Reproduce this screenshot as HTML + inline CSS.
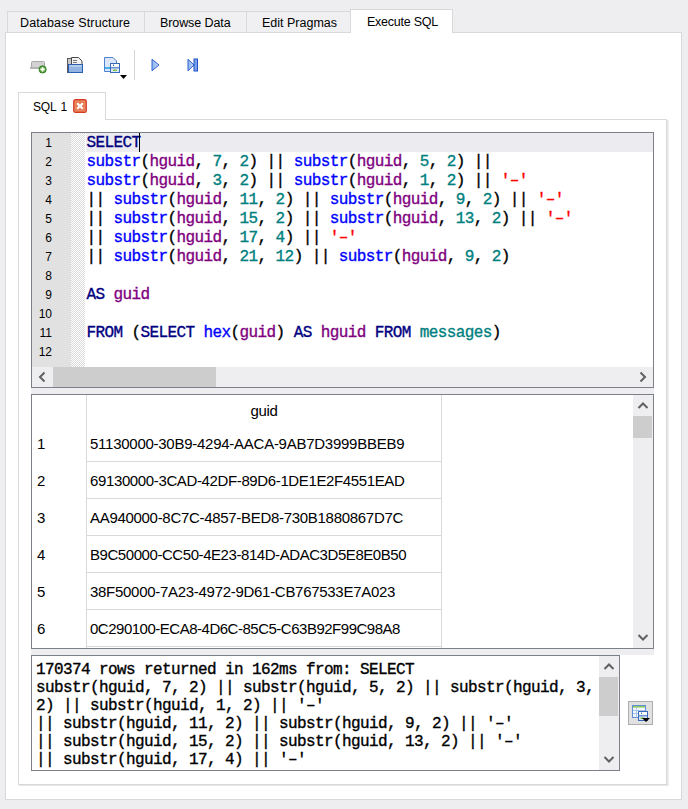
<!DOCTYPE html>
<html><head><meta charset="utf-8">
<style>
*{box-sizing:border-box;margin:0;padding:0}
html,body{width:688px;height:809px;overflow:hidden;background:#eeeef1;font-family:"Liberation Sans",sans-serif;color:#000}
.a{position:absolute}
.tab{position:absolute;top:11px;height:22px;border:1px solid #d9d9d9;border-bottom:none;background:#f0f0f2;font-size:12.5px;white-space:nowrap}
.tab span{position:absolute;top:4px}
.pane{position:absolute;left:5px;top:32px;width:677px;height:768px;background:#fff;border:1px solid #d9d9d9}
.mono{font-family:"Liberation Mono",monospace;font-size:16px;letter-spacing:-0.6px;-webkit-text-stroke-width:0.35px;white-space:pre}
.ln{position:absolute;height:19px;line-height:19px}
.lnum{left:0;width:20px;text-align:right;font-size:12px;color:#000}
.chk{background:repeating-conic-gradient(#dcdcdc 0 25%,#fff 0 50%) 0 0/2px 2px}
.gtxt{font-size:15px;letter-spacing:-0.3px;white-space:nowrap}
.k{color:#000080}.f{color:#0000ff}.i{color:#800080}.n{color:#008080}.s{color:#ff0000}.t{color:#008080}
</style></head><body>
<!-- tabs -->
<div class="tab" style="left:7px;width:138px"><span style="left:12px;letter-spacing:0.14px">Database Structure</span></div>
<div class="tab" style="left:144px;width:103px"><span style="left:15px;letter-spacing:-0.09px">Browse Data</span></div>
<div class="tab" style="left:246px;width:105px"><span style="left:15px">Edit Pragmas</span></div>
<div class="pane"></div>
<div class="tab" style="left:350px;top:9px;width:103px;height:24px;background:#fff;z-index:2"><span style="left:16px;top:5px;letter-spacing:-0.25px">Execute SQL</span></div>

<!-- toolbar -->
<svg class="a" style="left:26px;top:52px" width="26" height="26" viewBox="0 0 26 26">
<rect x="5.5" y="9.5" width="13" height="7" rx="1" fill="#d2d2d2" stroke="#a9a9a9"/>
<rect x="4" y="15" width="15" height="2" fill="#b4b4b4"/>
<circle cx="16.6" cy="17.4" r="3.6" fill="#5aa83c" stroke="#2f7a22" stroke-width="0.9"/>
<path d="M16.6 15.2v4.4M14.4 17.4h4.4" stroke="#fff" stroke-width="1.6"/>
</svg>
<svg class="a" style="left:62px;top:52px" width="26" height="26" viewBox="0 0 26 26">
<rect x="5.5" y="6.5" width="4" height="14" fill="#c9c9c9" stroke="#5a5a5a"/>
<path d="M9.5 20.5V5.5h7l3.5 3.5v11.5z" fill="#f2f2f2" stroke="#4a4a4a"/>
<path d="M11 8.5h4M11 10.5h4" stroke="#777" stroke-width="1"/>
<rect x="6.5" y="12.5" width="14" height="8" fill="#93b4e2" stroke="#2d5fb3"/>
<rect x="7.5" y="13.5" width="12" height="1" fill="#cfe6f0"/>
</svg>
<svg class="a" style="left:100px;top:52px" width="30" height="30" viewBox="0 0 30 30">
<path d="M4.5 19.5V5.5h8.5l3.5 3.5v10.5z" fill="#dbe6f8" stroke="#4c82d2"/>
<rect x="5" y="15" width="5" height="2" fill="#45b0e8"/>
<rect x="10.5" y="11.5" width="9" height="9" fill="#dfe8f8" stroke="#3a6bbb"/>
<rect x="11" y="12" width="8" height="2.5" fill="#fff"/>
<rect x="13" y="12.5" width="1" height="1.5" fill="#3a6bbb"/>
<rect x="11" y="15" width="8" height="1.5" fill="#6d93d2"/>
<rect x="13" y="17.5" width="4" height="1.5" fill="#7cc04a"/>
<path d="M20 23h7l-3.5 4z" fill="#000"/>
</svg>
<div class="a" style="left:134px;top:50px;width:1px;height:30px;background:#d4d4d4"></div>
<svg class="a" style="left:144px;top:52px" width="60" height="26" viewBox="0 0 60 26">
<defs><linearGradient id="pg" x1="0" y1="0" x2="1" y2="0"><stop offset="0" stop-color="#8fb4ee"/><stop offset="1" stop-color="#c2d6f6"/></linearGradient></defs>
<path d="M8 7.2v11.6l7-5.8z" fill="url(#pg)" stroke="#2f63d0" stroke-width="1"/>
<path d="M44 7.2v11.6l6-5.8z" fill="url(#pg)" stroke="#2f63d0" stroke-width="1"/>
<rect x="50" y="7" width="3.5" height="12" fill="#7aa2ea" stroke="#1f50c8" stroke-width="1"/>
</svg>

<!-- inner tab widget -->
<div class="a" style="left:19px;top:120px;width:650px;height:666px;background:#eeeef1"></div><div class="a" style="left:19px;top:120px;width:649px;height:666px;background:#e6e6ea"></div>
<div class="a" style="left:18px;top:119px;width:649px;height:666px;border:1px solid #d9d9d9;background:#fff"></div>
<div class="a" style="left:18px;top:92px;width:88px;height:28px;border:1px solid #d9d9d9;border-bottom:none;background:#fff;z-index:2"><span class="a" style="left:14px;top:7px;font-size:12px;letter-spacing:-0.2px;word-spacing:1.5px">SQL 1</span>
<svg class="a" style="left:54px;top:6px" width="14" height="14" viewBox="0 0 14 14"><rect x="0.8" y="0.8" width="12.4" height="12.4" rx="1.5" fill="#e67a52" stroke="#d83c22" stroke-width="1.4"/><rect x="2" y="2" width="10" height="10" fill="none" stroke="#ec9a78" stroke-width="0.6"/><path d="M4.2 4.2l5.6 5.6M9.8 4.2l-5.6 5.6" stroke="#fff" stroke-width="2.2"/></svg></div>

<!-- editor -->
<div class="a" id="ed" style="left:31px;top:132px;width:623px;height:256px;border:1px solid #7c8189;background:#fff;overflow:hidden">
<div class="a" style="left:0;top:0;width:39px;height:234px;background:#e1e1e1"></div>
<div class="a chk" style="left:39px;top:0;width:14px;height:234px"></div>
<div class="a" style="left:54px;top:0;width:567px;height:19px;background:#ececf0"></div>
<div class="ln lnum" style="top:1px">1</div>
<div class="ln mono" style="left:54.5px;top:1px"><span class="k">SELECT</span></div>
<div class="ln lnum" style="top:20px">2</div>
<div class="ln mono" style="left:54.5px;top:20px"><span class="f">substr</span>(<span class="i">hguid</span>, <span class="n">7</span>, <span class="n">2</span>) || <span class="f">substr</span>(<span class="i">hguid</span>, <span class="n">5</span>, <span class="n">2</span>) ||</div>
<div class="ln lnum" style="top:39px">3</div>
<div class="ln mono" style="left:54.5px;top:39px"><span class="f">substr</span>(<span class="i">hguid</span>, <span class="n">3</span>, <span class="n">2</span>) || <span class="f">substr</span>(<span class="i">hguid</span>, <span class="n">1</span>, <span class="n">2</span>) || <span class="s">'–'</span></div>
<div class="ln lnum" style="top:58px">4</div>
<div class="ln mono" style="left:54.5px;top:58px">|| <span class="f">substr</span>(<span class="i">hguid</span>, <span class="n">11</span>, <span class="n">2</span>) || <span class="f">substr</span>(<span class="i">hguid</span>, <span class="n">9</span>, <span class="n">2</span>) || <span class="s">'–'</span></div>
<div class="ln lnum" style="top:77px">5</div>
<div class="ln mono" style="left:54.5px;top:77px">|| <span class="f">substr</span>(<span class="i">hguid</span>, <span class="n">15</span>, <span class="n">2</span>) || <span class="f">substr</span>(<span class="i">hguid</span>, <span class="n">13</span>, <span class="n">2</span>) || <span class="s">'–'</span></div>
<div class="ln lnum" style="top:96px">6</div>
<div class="ln mono" style="left:54.5px;top:96px">|| <span class="f">substr</span>(<span class="i">hguid</span>, <span class="n">17</span>, <span class="n">4</span>) || <span class="s">'–'</span></div>
<div class="ln lnum" style="top:115px">7</div>
<div class="ln mono" style="left:54.5px;top:115px">|| <span class="f">substr</span>(<span class="i">hguid</span>, <span class="n">21</span>, <span class="n">12</span>) || <span class="f">substr</span>(<span class="i">hguid</span>, <span class="n">9</span>, <span class="n">2</span>)</div>
<div class="ln lnum" style="top:134px">8</div>
<div class="ln lnum" style="top:153px">9</div>
<div class="ln mono" style="left:54.5px;top:153px"><span class="k">AS</span> <span class="i">guid</span></div>
<div class="ln lnum" style="top:172px">10</div>
<div class="ln lnum" style="top:191px">11</div>
<div class="ln mono" style="left:54.5px;top:191px"><span class="k">FROM</span> (<span class="k">SELECT</span> <span class="f">hex</span>(<span class="i">guid</span>) <span class="k">AS</span> <span class="i">hguid</span> <span class="k">FROM</span> <span class="t">messages</span>)</div>
<div class="ln lnum" style="top:210px">12</div>
<div class="a" style="left:107px;top:0;width:1px;height:19px;background:#000"></div>
<div class="a" style="left:0;top:234px;width:621px;height:20px;background:#eeeef1">
<div class="a" style="left:21px;top:0;width:163px;height:20px;background:#cdcdcd"></div>
<svg class="a" style="left:0;top:0" width="21" height="20"><path d="M12.5 5.5 L8 10 L12.5 14.5" fill="none" stroke="#606060" stroke-width="2"/></svg>
<svg class="a" style="left:600px;top:0" width="21" height="20"><path d="M8.5 5.5 L13 10 L8.5 14.5" fill="none" stroke="#606060" stroke-width="2"/></svg>
</div>
</div>

<div class="a" style="left:31px;top:388px;width:623px;height:6px;background:#eeeef1"></div>
<div class="a" style="left:31px;top:649px;width:623px;height:6px;background:#eeeef1"></div>
<!-- grid -->
<div class="a" id="grid" style="left:31px;top:394px;width:623px;height:255px;border:1px solid #7c8189;background:#fff;overflow:hidden">
<div class="a" style="left:54px;top:0;width:1px;height:253px;background:#d9d9d9"></div>
<div class="a" style="left:409px;top:0;width:1px;height:253px;background:#d9d9d9"></div>
<div class="a gtxt" style="left:55px;top:1px;width:354px;height:29px;line-height:29px;text-align:center">guid</div>
<div class="a gtxt" style="left:5px;top:30px;height:37px;line-height:37px">1</div>
<div class="a gtxt" style="left:58px;top:30px;height:37px;line-height:37px;letter-spacing:-0.26px">51130000-30B9-4294-AACA-9AB7D3999BBEB9</div>
<div class="a" style="left:55px;top:66px;width:354px;height:1px;background:#d9d9d9"></div>
<div class="a gtxt" style="left:5px;top:67px;height:37px;line-height:37px">2</div>
<div class="a gtxt" style="left:58px;top:67px;height:37px;line-height:37px;letter-spacing:-0.37px">69130000-3CAD-42DF-89D6-1DE1E2F4551EAD</div>
<div class="a" style="left:55px;top:103px;width:354px;height:1px;background:#d9d9d9"></div>
<div class="a gtxt" style="left:5px;top:104px;height:37px;line-height:37px">3</div>
<div class="a gtxt" style="left:58px;top:104px;height:37px;line-height:37px;letter-spacing:-0.3px">AA940000-8C7C-4857-BED8-730B1880867D7C</div>
<div class="a" style="left:55px;top:140px;width:354px;height:1px;background:#d9d9d9"></div>
<div class="a gtxt" style="left:5px;top:141px;height:37px;line-height:37px">4</div>
<div class="a gtxt" style="left:58px;top:141px;height:37px;line-height:37px;letter-spacing:-0.435px">B9C50000-CC50-4E23-814D-ADAC3D5E8E0B50</div>
<div class="a" style="left:55px;top:177px;width:354px;height:1px;background:#d9d9d9"></div>
<div class="a gtxt" style="left:5px;top:178px;height:37px;line-height:37px">5</div>
<div class="a gtxt" style="left:58px;top:178px;height:37px;line-height:37px;letter-spacing:-0.29px">38F50000-7A23-4972-9D61-CB767533E7A023</div>
<div class="a" style="left:55px;top:214px;width:354px;height:1px;background:#d9d9d9"></div>
<div class="a gtxt" style="left:5px;top:215px;height:37px;line-height:37px">6</div>
<div class="a gtxt" style="left:58px;top:215px;height:37px;line-height:37px;letter-spacing:-0.49px">0C290100-ECA8-4D6C-85C5-C63B92F99C98A8</div>
<div class="a" style="left:55px;top:251px;width:354px;height:1px;background:#d9d9d9"></div>
<div class="a" style="left:601px;top:0;width:20px;height:253px;background:#eeeef1">
<div class="a" style="left:0;top:21px;width:19px;height:22px;background:#cdcdcd"></div>
<svg class="a" style="left:0;top:0" width="20" height="21"><path d="M5.5 13 L10 8.5 L14.5 13" fill="none" stroke="#606060" stroke-width="2"/></svg>
<svg class="a" style="left:0;top:232px" width="20" height="21"><path d="M5.5 8 L10 12.5 L14.5 8" fill="none" stroke="#606060" stroke-width="2"/></svg>
</div>
</div>

<!-- message -->
<div class="a" id="msg" style="left:31px;top:655px;width:589px;height:116px;border:1px solid #7c8189;background:#fff;overflow:hidden">
<div class="a mono" style="left:4px;top:5px;height:18px;line-height:18px">170374 rows returned in 162ms from: SELECT</div>
<div class="a mono" style="left:4px;top:23px;height:18px;line-height:18px">substr(hguid, 7, 2) || substr(hguid, 5, 2) || substr(hguid, 3,</div>
<div class="a mono" style="left:4px;top:41px;height:18px;line-height:18px">2) || substr(hguid, 1, 2) || '–'</div>
<div class="a mono" style="left:4px;top:59px;height:18px;line-height:18px">|| substr(hguid, 11, 2) || substr(hguid, 9, 2) || '–'</div>
<div class="a mono" style="left:4px;top:77px;height:18px;line-height:18px">|| substr(hguid, 15, 2) || substr(hguid, 13, 2) || '–'</div>
<div class="a mono" style="left:4px;top:95px;height:18px;line-height:18px">|| substr(hguid, 17, 4) || '–'</div>
<div class="a" style="left:567px;top:0;width:20px;height:114px;background:#eeeef1">
<div class="a" style="left:0;top:21px;width:19px;height:39px;background:#cdcdcd"></div>
<svg class="a" style="left:0;top:0" width="20" height="21"><path d="M5.5 13 L10 8.5 L14.5 13" fill="none" stroke="#606060" stroke-width="2"/></svg>
<svg class="a" style="left:0;top:93px" width="20" height="21"><path d="M5.5 8 L10 12.5 L14.5 8" fill="none" stroke="#606060" stroke-width="2"/></svg>
</div>
</div>

<div class="a" style="left:628px;top:701px;width:25px;height:24px;background:#e1e1e1;border:1px solid #adadad"></div>
<svg class="a" style="left:628px;top:701px" width="25" height="24" viewBox="0 0 25 24">
<rect x="4.5" y="4.5" width="13" height="12" fill="#f4f8ff" stroke="#5c8fd6"/>
<rect x="5" y="5" width="12" height="1.6" fill="#8cc860"/>
<path d="M5 9.5h12M5 12.5h12M8.5 7v9.5" stroke="#a8c4ec" stroke-width="1"/>
<rect x="10.5" y="10.5" width="9" height="9" fill="#dfe8f8" stroke="#3a6bbb"/>
<rect x="11" y="11" width="8" height="2.5" fill="#fff"/>
<rect x="13" y="11.5" width="1" height="1.5" fill="#3a6bbb"/>
<rect x="11" y="14" width="8" height="1.5" fill="#6d93d2"/>
<rect x="12.5" y="16.5" width="4" height="1.5" fill="#7cc04a"/>
<path d="M14 17h8l-4 4z" fill="#000"/>
</svg>
</body></html>
